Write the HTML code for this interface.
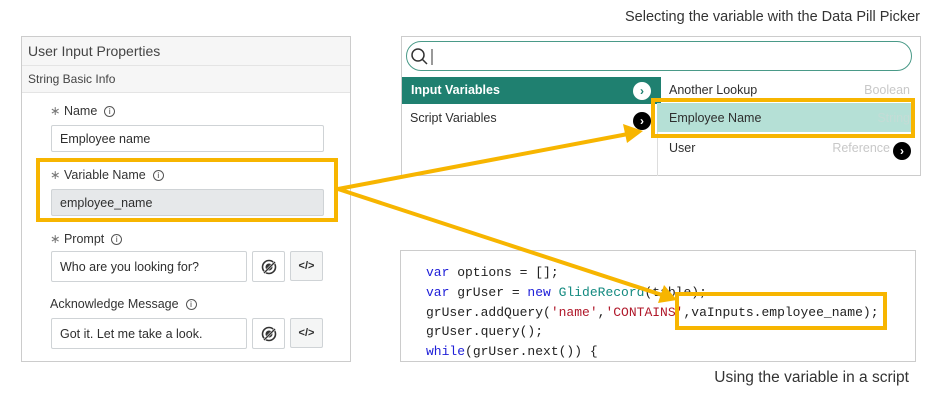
<!DOCTYPE html>
<html><head><meta charset="utf-8"><style>
*{box-sizing:border-box;margin:0;padding:0}
body{width:935px;height:405px;background:#fff;position:relative;overflow:hidden;font-family:"Liberation Sans",sans-serif;color:#2e2e2e}
.a{position:absolute}
.inp{position:absolute;border:1px solid #cfd3d6;border-radius:2px;background:#fff;font-size:12.5px;padding-left:8px;display:flex;align-items:center}
.lbl{position:absolute;font-size:12.5px;color:#333}
.info{display:inline-block;width:11px;height:11px;border:1px solid #555;border-radius:50%;font-size:8px;text-align:center;line-height:9px;margin-left:7px;vertical-align:1px}
.btn{position:absolute;width:33px;height:30px;border:1px solid #cfd3d6;border-radius:2px;background:#fff;display:flex;align-items:center;justify-content:center;font-size:11px;font-weight:bold}
.code{position:absolute;left:426px;font-family:"Liberation Mono",monospace;font-size:13px;color:#222;white-space:pre}
.k{color:#2020d8}.s{color:#b0182a}.g{color:#138a80}
.ob{position:absolute;border:4px solid #f7b500}
</style></head><body>
<div class="a" style="right:15px;top:9px;font-size:14.5px;color:#333">Selecting the variable with the Data Pill Picker</div>
<div class="a" style="right:26px;top:369px;font-size:15.5px;color:#333">Using the variable in a script</div>

<div class="a" style="left:21px;top:36px;width:330px;height:326px;border:1px solid #ccc"></div>
<div class="a" style="left:22px;top:37px;width:328px;height:29px;background:#f6f6f6;border-bottom:1px solid #e4e4e4;font-size:14px;padding:6px 0 0 6px;color:#444">User Input Properties</div>
<div class="a" style="left:22px;top:66px;width:328px;height:27px;background:#f6f6f6;border-bottom:1px solid #e4e4e4;font-size:12px;padding:6px 0 0 6px;color:#444">String Basic Info</div>
<div class="lbl" style="left:50px;top:103px"><span style="color:#777">∗</span> Name<span class="info">i</span></div>
<div class="inp" style="left:51px;top:125px;width:273px;height:27px">Employee name</div>
<div class="lbl" style="left:50px;top:167px"><span style="color:#777">∗</span> Variable Name<span class="info">i</span></div>
<div class="inp" style="left:51px;top:189px;width:273px;height:27px;background:#e6e8ea">employee_name</div>
<div class="ob" style="left:36px;top:158px;width:302px;height:64px"></div>
<div class="lbl" style="left:50px;top:231px"><span style="color:#777">∗</span> Prompt<span class="info">i</span></div>
<div class="inp" style="left:51px;top:251px;width:196px;height:31px">Who are you looking for?</div>
<div class="btn" style="left:252px;top:251px;width:33px;height:31px"><svg width="18" height="18"><circle cx="9" cy="9" r="6.5" fill="none" stroke="#333" stroke-width="1.6"/><circle cx="9" cy="9" r="3.5" fill="#333"/><line x1="3" y1="16" x2="16" y2="3" stroke="#fff" stroke-width="2.5"/><line x1="4" y1="15" x2="15" y2="4" stroke="#333" stroke-width="1.4"/></svg></div>
<div class="btn" style="left:290px;top:251px;background:#f4f5f5">&lt;/&gt;</div>
<div class="lbl" style="left:50px;top:297px">Acknowledge Message<span class="info">i</span></div>
<div class="inp" style="left:51px;top:318px;width:196px;height:31px">Got it. Let me take a look.</div>
<div class="btn" style="left:252px;top:318px;width:33px;height:31px"><svg width="18" height="18"><circle cx="9" cy="9" r="6.5" fill="none" stroke="#333" stroke-width="1.6"/><circle cx="9" cy="9" r="3.5" fill="#333"/><line x1="3" y1="16" x2="16" y2="3" stroke="#fff" stroke-width="2.5"/><line x1="4" y1="15" x2="15" y2="4" stroke="#333" stroke-width="1.4"/></svg></div>
<div class="btn" style="left:290px;top:318px;background:#f4f5f5">&lt;/&gt;</div>

<div class="a" style="left:401px;top:36px;width:520px;height:140px;border:1px solid #ccc"></div>
<div class="a" style="left:406px;top:41px;width:506px;height:30px;border:1.5px solid #4a9a88;border-radius:15px"></div>
<svg class="a" style="left:410px;top:47px" width="24" height="20"><circle cx="8" cy="8" r="6" fill="none" stroke="#333" stroke-width="1.5"/><line x1="12" y1="12" x2="17" y2="17" stroke="#333" stroke-width="1.5"/><line x1="22" y1="2" x2="22" y2="18" stroke="#333" stroke-width="1"/></svg>
<div class="a" style="left:402px;top:77px;width:259px;height:27px;background:#1f8070;color:#fff;font-weight:bold;font-size:12.5px;padding:6px 0 0 9px">Input Variables</div>
<div class="a" style="left:633px;top:82px;width:18px;height:18px;border-radius:50%;background:#fff;color:#1f8070;font-size:12px;font-weight:bold;text-align:center;line-height:18px">›</div>
<div class="a" style="left:410px;top:111px;font-size:12.5px">Script Variables</div>
<div class="a" style="left:633px;top:112px;width:18px;height:18px;border-radius:50%;background:#000;color:#fff;font-size:12px;font-weight:bold;text-align:center;line-height:18px">›</div>
<div class="a" style="left:657px;top:104px;width:1px;height:72px;background:#ddd"></div>
<div class="a" style="left:669px;top:83px;font-size:12.5px">Another Lookup</div>
<div class="a" style="right:25px;top:83px;font-size:12.5px;color:#c8c8c8">Boolean</div>
<div class="a" style="left:657px;top:103px;width:254px;height:29px;background:#b5e0d6"></div>
<div class="a" style="left:669px;top:111px;font-size:12.5px">Employee Name</div>
<div class="a" style="right:25px;top:111px;font-size:12.5px;color:#c4dcd6">String</div>
<div class="ob" style="left:651px;top:98px;width:264px;height:40px"></div>
<div class="a" style="left:669px;top:141px;font-size:12.5px">User</div>
<div class="a" style="right:45px;top:141px;font-size:12.5px;color:#c8c8c8">Reference</div>
<div class="a" style="left:893px;top:142px;width:18px;height:18px;border-radius:50%;background:#000;color:#fff;font-size:12px;font-weight:bold;text-align:center;line-height:18px">›</div>

<div class="a" style="left:400px;top:250px;width:516px;height:112px;border:1px solid #ccc"></div>
<div class="code" style="top:265px"><span class="k">var</span> options = [];</div>
<div class="code" style="top:285px"><span class="k">var</span> grUser = <span class="k">new</span> <span class="g">GlideRecord</span>(table);</div>
<div class="code" style="top:305px">grUser.addQuery(<span class="s">'name'</span>,<span class="s">'CONTAINS'</span>,vaInputs.employee_name);</div>
<div class="code" style="top:324px">grUser.query();</div>
<div class="code" style="top:344px"><span class="k">while</span>(grUser.next()) {</div>
<div class="ob" style="left:675px;top:292px;width:212px;height:38px"></div>

<svg class="a" style="left:0;top:0" width="935" height="405">
<g stroke="#f7b500" stroke-width="4" fill="#f7b500">
<line x1="338" y1="189" x2="628" y2="134"/>
<polygon points="643,131 623,124 627,143" stroke="none"/>
<line x1="338" y1="189" x2="662" y2="295"/>
<polygon points="677,300 664,285 658,303" stroke="none"/>
</g></svg>
</body></html>
